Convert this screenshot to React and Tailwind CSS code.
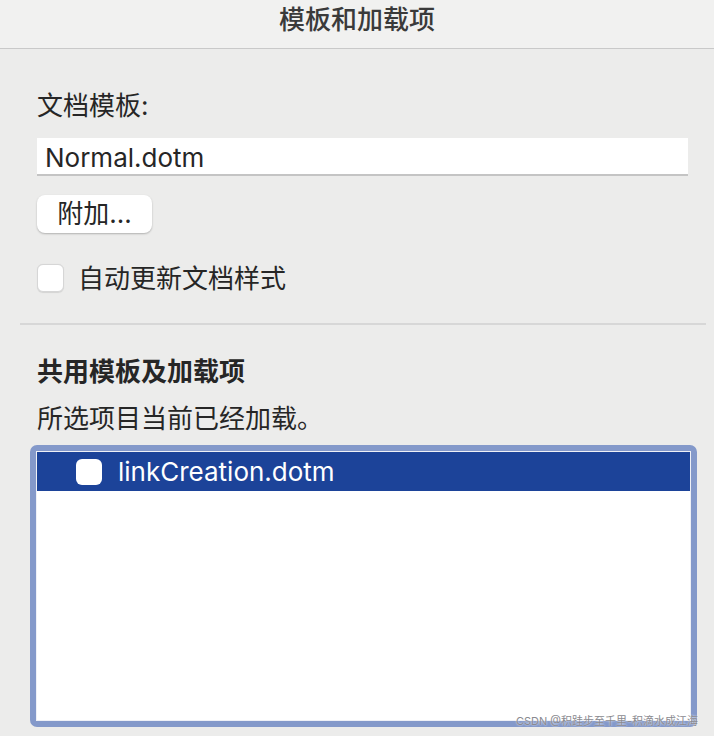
import React from "react";

const FONT = { fontFamily: 'Inter, "Noto Sans CJK SC", sans-serif' };

export default function App() {
  return (
    <div
      className="relative w-[714px] h-[736px] overflow-hidden bg-[#ececeb] text-[#262626]"
      style={FONT}
    >
      {/* Title bar */}
      <div className="h-[49px] bg-[#f1f1f0] border-b border-[#c9c9c9] flex justify-center pt-[4px]">
        <span className="text-[26px] leading-[32px] font-medium text-[#3a3a3a]">模板和加载项</span>
      </div>

      <div className="flex flex-col pl-[37px] pr-[26px]">
        <div className="mt-[41px] text-[26px] leading-[32px]">文档模板:</div>

        <div className="mt-[16px] h-[38px] bg-white border-b-2 border-[#c4c4c4] flex items-center pl-[8px] pt-[2px] text-[26px]">
          Normal.dotm
        </div>

        <div className="mt-[19px] w-[115px] h-[38px] bg-white rounded-[8px] shadow-[0_1px_2px_rgba(0,0,0,0.25)] flex items-center justify-center text-[26px] leading-none">
          附加...
        </div>

        <div className="mt-[31px] h-[28px] flex items-center gap-[14px]">
          <div className="w-[27px] h-[28px] bg-white rounded-[6px] border border-[#d6d6d6] shadow-[0_0.5px_1px_rgba(0,0,0,0.1)]" />
          <span className="text-[26px] leading-[32px] pt-[2px]">自动更新文档样式</span>
        </div>
      </div>

      <div className="mt-[31px] ml-[20px] mr-[8px] h-[2px] bg-[#d7d7d7]" />

      <div className="flex flex-col pl-[37px] pr-[26px]">
        <div className="mt-[31px] text-[26px] leading-[32px] font-bold">共用模板及加载项</div>
        <div className="mt-[15px] text-[26px] leading-[32px]">所选项目当前已经加载。</div>
      </div>

      <div className="mt-[10px] ml-[30px] w-[667px] h-[282px] border-[6px] border-[#8499ca] rounded-[7px] bg-white">
        <div className="w-full h-full border border-[#eef0f6] flex flex-col">
          <div className="h-[39px] bg-[#1c4399] flex items-center pl-[39px] gap-[16px]">
            <div className="w-[26px] h-[26px] bg-white rounded-[6px]" />
            <span className="text-[26px] leading-[32px] text-white">linkCreation.dotm</span>
          </div>
        </div>
      </div>

      <div className="absolute right-[16px] bottom-[8px] text-[11px] leading-[14px] text-[#8a8a90] [text-shadow:0_0_2px_#ffffff]">
        CSDN @积跬步至千里-积滴水成江海
      </div>
    </div>
  );
}
